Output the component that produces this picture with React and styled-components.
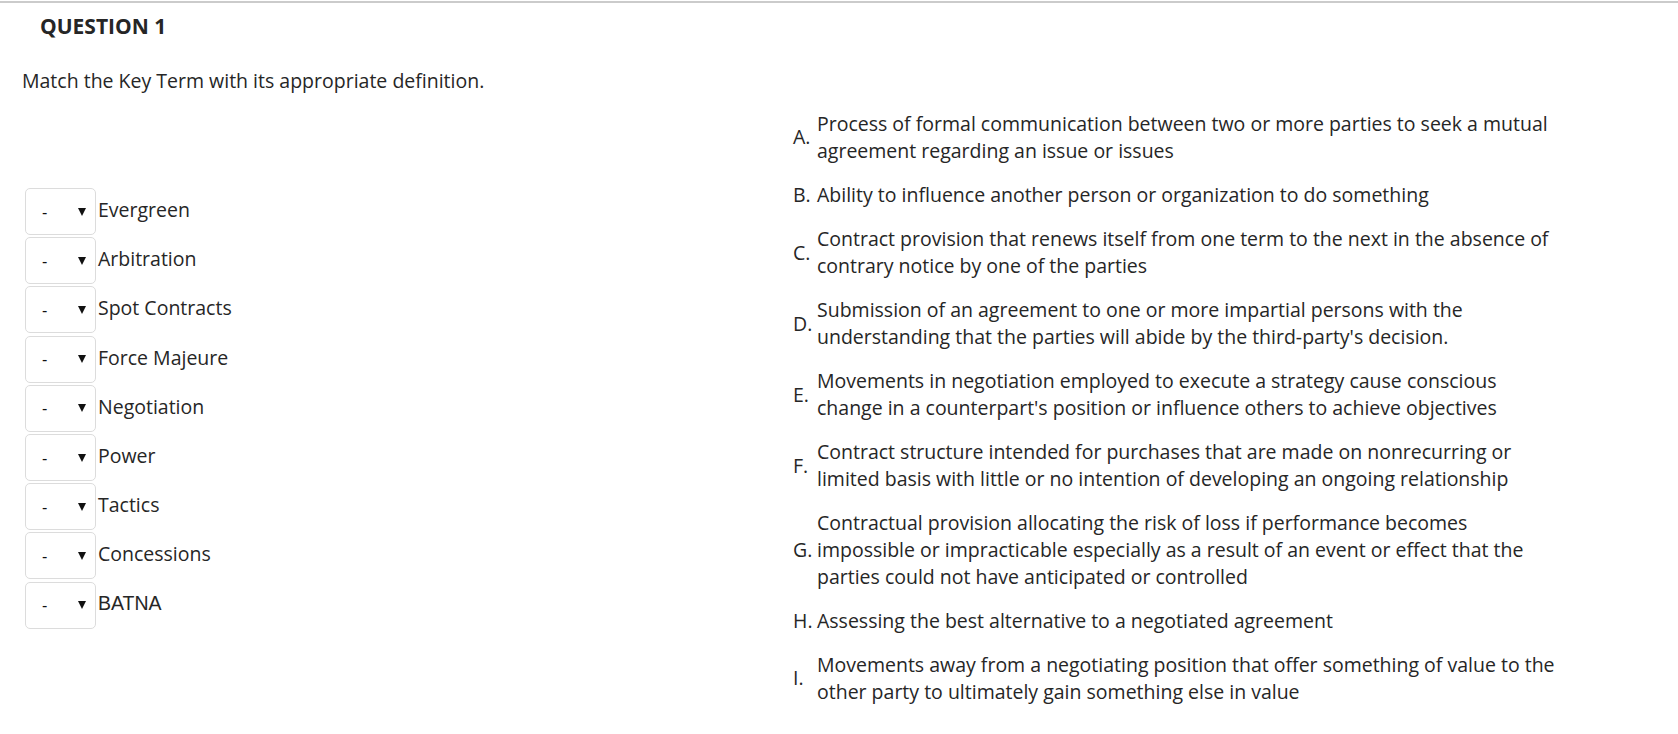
import React from "react";
import styled, { createGlobalStyle } from "styled-components";

const terms = [
  { label: "Evergreen" },
  { label: "Arbitration" },
  { label: "Spot Contracts" },
  { label: "Force Majeure" },
  { label: "Negotiation" },
  { label: "Power" },
  { label: "Tactics" },
  { label: "Concessions" },
  { label: "BATNA", plain: true },
];

const definitions = [
  {
    letter: "A.",
    lines: [
      "Process of formal communication between two or more parties to seek a mutual",
      "agreement regarding an issue or issues",
    ],
  },
  { letter: "B.", lines: ["Ability to influence another person or organization to do something"] },
  {
    letter: "C.",
    lines: [
      "Contract provision that renews itself from one term to the next in the absence of",
      "contrary notice by one of the parties",
    ],
  },
  {
    letter: "D.",
    lines: [
      "Submission of an agreement to one or more impartial persons with the",
      "understanding that the parties will abide by the third-party's decision.",
    ],
  },
  {
    letter: "E.",
    lines: [
      "Movements in negotiation employed to execute a strategy cause conscious",
      "change in a counterpart's position or influence others to achieve objectives",
    ],
  },
  {
    letter: "F.",
    lines: [
      "Contract structure intended for purchases that are made on nonrecurring or",
      "limited basis with little or no intention of developing an ongoing relationship",
    ],
  },
  {
    letter: "G.",
    lines: [
      "Contractual provision allocating the risk of loss if performance becomes",
      "impossible or impracticable especially as a result of an event or effect that the",
      "parties could not have anticipated or controlled",
    ],
  },
  { letter: "H.", lines: ["Assessing the best alternative to a negotiated agreement"] },
  {
    letter: "I.",
    lines: [
      "Movements away from a negotiating position that offer something of value to the",
      "other party to ultimately gain something else in value",
    ],
  },
];

function App() {
  return (
    <>
      <GlobalStyle />
      <Page>
        <TopRule />
        <Title>QUESTION 1</Title>
        <Prompt>Match the Key Term with its appropriate definition.</Prompt>
        <MatchArea>
          <TermList>
            {terms.map((term) => (
              <TermRow key={term.label}>
                <SelectBox>
                  <Dash>-</Dash>
                  <svg width="8" height="8" viewBox="0 0 8 8">
                    <polygon points="0,0 8,0 4,8" fill="#111" />
                  </svg>
                </SelectBox>
                <TermLabel $plain={term.plain}>{term.label}</TermLabel>
              </TermRow>
            ))}
          </TermList>
          <DefinitionList>
            {definitions.map((def) => (
              <Definition key={def.letter}>
                <Letter>{def.letter}</Letter>
                <DefinitionText>
                  {def.lines.map((line) => (
                    <Line key={line}>{line}</Line>
                  ))}
                </DefinitionText>
              </Definition>
            ))}
          </DefinitionList>
        </MatchArea>
      </Page>
    </>
  );
}

export default App;

const GlobalStyle = createGlobalStyle`
  body {
    margin: 0;
    background: #fff;
    font-family: "Open Sans", "Liberation Sans", sans-serif;
    color: #333;
  }
`;

const Page = styled.div`
  width: 1678px;
  height: 734px;
  overflow: hidden;
  background: #fff;
`;

const TopRule = styled.div`
  margin-top: 1px;
  height: 2px;
  background: #cbcbcb;
`;

const Title = styled.h2`
  margin: 0;
  padding: 10px 0 0 40px;
  font-size: 21px;
  line-height: 26px;
  font-weight: 700;
  color: #262626;
`;

const Prompt = styled.p`
  margin: 0;
  padding: 29px 0 0 22px;
  font-size: 19.5px;
  line-height: 26px;
  color: #262626;
`;

const MatchArea = styled.div`
  display: grid;
  grid-template-columns: 793px auto;
  align-items: center;
  padding-top: 17px;
`;

const TermList = styled.div`
  display: flex;
  flex-direction: column;
  gap: 2.2px;
  padding-left: 25px;
`;

const TermRow = styled.div`
  display: flex;
  align-items: center;
`;

const SelectBox = styled.div`
  box-sizing: border-box;
  width: 71px;
  height: 47px;
  border: 1px solid #dcdcdc;
  border-radius: 5px;
  display: flex;
  align-items: center;
  padding: 2px 0 0 16px;
  font-family: "Liberation Sans", Arial, sans-serif;

  svg {
    margin-left: 31px;
    margin-top: -2px;
  }
`;

const Dash = styled.span`
  font-size: 16px;
  color: #111;
`;

const TermLabel = styled.span`
  margin-left: 2px;
  margin-top: -4px;
  font-size: 19.5px;
  font-family: ${(p) =>
    p.$plain ? '"Liberation Sans", Arial, sans-serif' : '"Open Sans", sans-serif'};
  color: #262626;
`;

const DefinitionList = styled.div`
  display: flex;
  flex-direction: column;
  gap: 17.3px;
`;

const Definition = styled.div`
  display: flex;
  align-items: center;
  font-size: 19.5px;
  line-height: 26.85px;
  color: #262626;
`;

const Letter = styled.span`
  width: 24px;
  flex-shrink: 0;
`;

const DefinitionText = styled.div`
  display: flex;
  flex-direction: column;
`;

const Line = styled.span`
  white-space: nowrap;
`;
